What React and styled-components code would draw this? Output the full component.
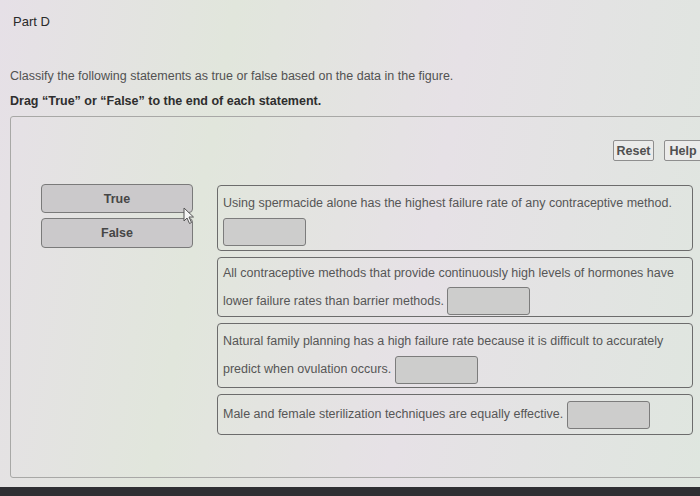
import React from "react";
import styled, { createGlobalStyle } from "styled-components";

const Global = createGlobalStyle`
  html, body { margin: 0; padding: 0; }
  body {
    background: #e3e2e0;
    font-family: "Liberation Sans", Arial, sans-serif;
  }
  #root { height: 496px; overflow: hidden; }
`;

const Page = styled.div`
  position: relative;
  height: 496px;
  display: flex;
  flex-direction: column;
  background: linear-gradient(100deg, #e6e0e7 0%, #e1e6dc 30%, #e6e1e6 60%, #dfe6df 100%);
  overflow: hidden;
`;

const Title = styled.div`
  font-size: 13px;
  line-height: 16px;
  color: #2a2a2a;
  padding: 14px 0 0 13px;
`;

const Instructions = styled.div`
  margin-top: 39px;
  padding-left: 10px;
  display: flex;
  flex-direction: column;
  gap: 11px;
`;

const Line = styled.div`
  font-size: 12.5px;
  line-height: 14px;
  color: ${(p) => (p.$bold ? "#2e2e2e" : "#525252")};
  font-weight: ${(p) => (p.$bold ? 700 : 400)};
`;

const Panel = styled.div`
  margin: 8px 0 0 10px;
  width: 700px;
  height: 362px;
  box-sizing: border-box;
  border: 1px solid #a8a8a6;
  border-radius: 3px;
  display: flex;
  flex-direction: column;
`;

const Toolbar = styled.div`
  display: flex;
  justify-content: flex-end;
  gap: 10px;
  padding: 23px 7px 0 0;
`;

const ToolButton = styled.button`
  height: 21px;
  width: ${(p) => p.$w}px;
  box-sizing: border-box;
  border: 1px solid #8e8e8e;
  border-radius: 2px;
  background: #ebebea;
  font-family: "Liberation Sans", Arial, sans-serif;
  font-size: 12.5px;
  font-weight: 700;
  color: #505050;
  padding: 0;
`;

const Content = styled.div`
  display: flex;
  gap: 24px;
  padding: 23px 0 0 30px;
`;

const Tiles = styled.div`
  position: relative;
  width: 152px;
  display: flex;
  flex-direction: column;
  gap: 5px;
`;

const Tile = styled.div`
  height: ${(p) => p.$h}px;
  box-sizing: border-box;
  border: 1.5px solid #7a7a7a;
  border-radius: 4px;
  background: #cbc9cb;
  display: flex;
  align-items: center;
  justify-content: center;
  font-size: 12.5px;
  font-weight: 700;
  color: #464646;
`;

const Cursor = styled.svg`
  position: absolute;
  left: 142px;
  top: 23px;
`;

const Statements = styled.div`
  width: 476px;
  display: flex;
  flex-direction: column;
  gap: 6px;
  padding-top: 1px;
`;

const Statement = styled.div`
  box-sizing: border-box;
  border: 1.5px solid #6c6c6c;
  border-radius: 4px;
  padding: ${(p) => p.$pad};
  font-size: 12.5px;
  line-height: 28px;
  color: #565656;
`;

const Drop = styled.span`
  display: inline-block;
  vertical-align: middle;
  width: 83px;
  height: 28px;
  box-sizing: border-box;
  border: 1.5px solid #7c7c7c;
  border-radius: 3px;
  background: #cdcdcc;
`;

const BottomBar = styled.div`
  position: absolute;
  left: 0;
  right: 0;
  bottom: 0;
  height: 9px;
  background: #2f2f33;
`;

export default function App() {
  const statements = [
    { text: "Using spermacide alone has the highest failure rate of any contraceptive method.", pad: "3px 5px 4px" },
    { text: "All contraceptive methods that provide continuously high levels of hormones have lower failure rates than barrier methods.", pad: "1px 5px 1px" },
    { text: "Natural family planning has a high failure rate because it is difficult to accurately predict when ovulation occurs.", pad: "3px 5px 3px" },
    { text: "Male and female sterilization techniques are equally effective.", pad: "5px 5px 5px" },
  ];
  return (
    <Page>
      <Global />
      <Title>Part D</Title>
      <Instructions>
        <Line>Classify the following statements as true or false based on the data in the figure.</Line>
        <Line $bold>Drag “True” or “False” to the end of each statement.</Line>
      </Instructions>
      <Panel>
        <Toolbar>
          <ToolButton $w={41}>Reset</ToolButton>
          <ToolButton $w={38}>Help</ToolButton>
        </Toolbar>
        <Content>
          <Tiles>
            <Tile $h={29}>True</Tile>
            <Tile $h={30}>False</Tile>
            <Cursor width="12" height="18" viewBox="0 0 12 18">
              <path d="M1 1 L1 14 L4 11 L6.5 16.5 L8.5 15.5 L6 10 L10.5 10 Z" fill="#f4f4f4" stroke="#555" strokeWidth="1" strokeLinejoin="round" />
            </Cursor>
          </Tiles>
          <Statements>
            {statements.map((s, i) => (
              <Statement key={i} $pad={s.pad}>
                {s.text} <Drop />
              </Statement>
            ))}
          </Statements>
        </Content>
      </Panel>
      <BottomBar />
    </Page>
  );
}
